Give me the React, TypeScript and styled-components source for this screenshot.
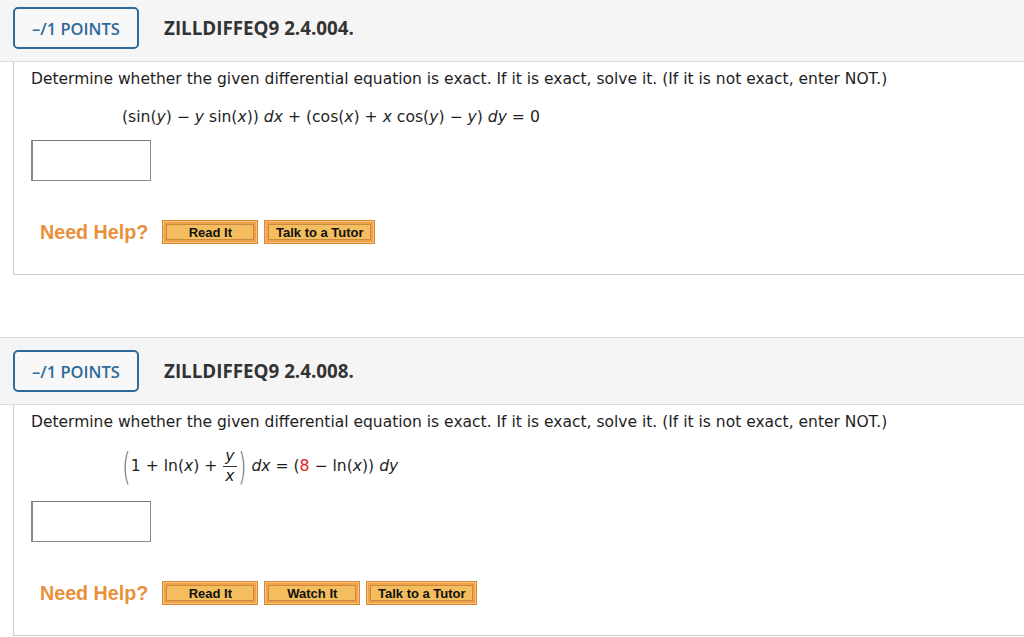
import React from "react";
import styled, { createGlobalStyle } from "styled-components";

const Global = createGlobalStyle`
  html, body { margin: 0; padding: 0; background: #fff; }
  body { font-family: "DejaVu Sans", Verdana, sans-serif; color: #222; overflow: hidden; }
`;

const Page = styled.div`
  width: 1024px;
  display: flex;
  flex-direction: column;
`;

const Question = styled.section<{ $first?: boolean }>`
  display: flex;
  flex-direction: column;
  margin-top: ${(p) => (p.$first ? "-6px" : "62px")};
`;

const Header = styled.header`
  display: flex;
  align-items: center;
  gap: 25px;
  padding: 12px 13px;
  background: #f5f5f5;
  border-top: 1px solid #dcdcdc;
  border-bottom: 1px solid #dcdcdc;
`;

const Points = styled.div`
  box-sizing: border-box;
  width: 126px;
  height: 42px;
  border: 2px solid #2d6a9b;
  border-radius: 5px;
  display: flex;
  align-items: center;
  justify-content: center;
  font-family: "Open Sans", sans-serif;
  font-weight: 600;
  font-size: 16.5px;
  color: #2d6a9b;
  background: #f8f8f8;
`;

const Title = styled.h2`
  margin: 0;
  font-family: "Open Sans", sans-serif;
  font-weight: 700;
  font-size: 18.8px;
  color: #333;
`;

const Body = styled.div`
  margin-left: 13px;
  border-left: 1px solid #cccccc;
  border-bottom: 1px solid #cccccc;
  padding: 7px 0 30px 17px;
  display: flex;
  flex-direction: column;
  align-items: flex-start;
`;

const Prompt = styled.p`
  margin: 0;
  font-size: 15.5px;
  line-height: 20px;
  color: #1e1e1e;
  white-space: nowrap;
`;

const Equation = styled.div<{ $top: number }>`
  margin: ${(p) => p.$top}px 0 0 91px;
  font-size: 15.6px;
  line-height: 20px;
  color: #1e1e1e;
  white-space: pre;
`;

const V = styled.i`
  font-style: italic;
`;

const Red = styled.span`
  color: #e5221c;
`;

const BigParen = styled.span`
  display: inline-block;
  vertical-align: middle;
  font-size: 38px;
  line-height: 42px;
  font-weight: 200;
  color: #666;
  transform: scaleX(0.55);
  margin: 0 -3px;
`;

const Frac = styled.span`
  display: inline-flex;
  vertical-align: middle;
  flex-direction: column;
  align-items: center;
  margin: 0 1px;
`;

const Num = styled.span`
  padding: 0 2px;
  line-height: 19px;
  border-bottom: 1px solid #333;
`;

const Den = styled.span`
  line-height: 19px;
`;

const Answer = styled.div<{ $top: number }>`
  box-sizing: border-box;
  width: 120px;
  height: 41px;
  margin-top: ${(p) => p.$top}px;
  border: 1px solid #8a8a8a;
  border-top-color: #7a7a7a;
  border-left: 2px solid #8a8a8a;
  background: #fff;
`;

const HelpRow = styled.div`
  display: flex;
  align-items: center;
  margin-top: 39px;
  margin-left: 9px;
`;

const NeedHelp = styled.span`
  font-family: "Liberation Sans", Arial, sans-serif;
  font-weight: 700;
  font-size: 19.7px;
  color: #e8903a;
  margin-right: 14px;
`;

const Buttons = styled.div`
  display: flex;
  gap: 6px;
`;

const HelpButton = styled.button<{ $w: number }>`
  box-sizing: border-box;
  width: ${(p) => p.$w}px;
  height: 24px;
  padding: 0;
  font-family: "Liberation Sans", Arial, sans-serif;
  font-weight: 700;
  font-size: 13px;
  color: #111;
  background: #f4bd5e;
  border: 1px solid #d6872f;
  box-shadow: inset 0 0 0 1px #f8c27a, inset 0 0 0 3px #f2a04a, inset 0 0 0 4px #c98a3f;
  cursor: pointer;
`;

function Help({ buttons }: { buttons: [string, number][] }) {
  return (
    <HelpRow>
      <NeedHelp>Need Help?</NeedHelp>
      <Buttons>
        {buttons.map(([label, w]) => (
          <HelpButton key={label} $w={w}>
            {label}
          </HelpButton>
        ))}
      </Buttons>
    </HelpRow>
  );
}

const PROMPT =
  "Determine whether the given differential equation is exact. If it is exact, solve it. (If it is not exact, enter NOT.)";

export default function App() {
  return (
    <Page>
      <Global />
      <Question $first>
        <Header>
          <Points>–/1 POINTS</Points>
          <Title>ZILLDIFFEQ9 2.4.004.</Title>
        </Header>
        <Body>
          <Prompt>{PROMPT}</Prompt>
          <Equation $top={18}>
            (sin(<V>y</V>) − <V>y</V> sin(<V>x</V>)) <V>dx</V> + (cos(<V>x</V>) + <V>x</V> cos(<V>y</V>) − <V>y</V>) <V>dy</V> = 0
          </Equation>
          <Answer $top={13} />
          <Help buttons={[["Read It", 96], ["Talk to a Tutor", 111]]} />
        </Body>
      </Question>
      <Question>
        <Header>
          <Points>–/1 POINTS</Points>
          <Title>ZILLDIFFEQ9 2.4.008.</Title>
        </Header>
        <Body>
          <Prompt>{PROMPT}</Prompt>
          <Equation $top={13}>
            <BigParen>(</BigParen>1 + ln(<V>x</V>) + <Frac><Num><V>y</V></Num><Den><V>x</V></Den></Frac><BigParen>)</BigParen>{" "}<V>dx</V> = (<Red>8</Red> − ln(<V>x</V>)) <V>dy</V>
          </Equation>
          <Answer $top={14} />
          <Help buttons={[["Read It", 96], ["Watch It", 96], ["Talk to a Tutor", 111]]} />
        </Body>
      </Question>
    </Page>
  );
}
